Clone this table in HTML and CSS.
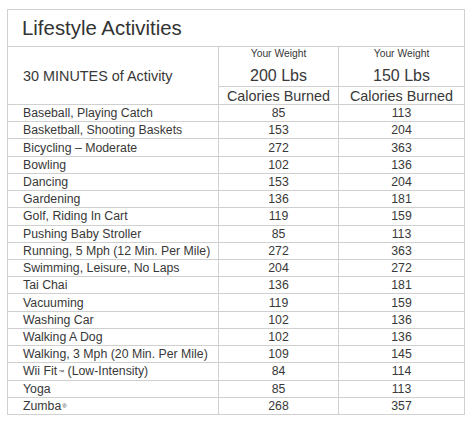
FILE: index.html
```html
<!DOCTYPE html>
<html>
<head>
<meta charset="utf-8">
<link rel="stylesheet" href="styles.css">
</head>
<body>
<div class="sheet">
  <div class="cell title">Lifestyle Activities</div>
  <div class="cell head-label">30 MINUTES of Activity</div>
  <div class="cell weight"><span class="yw">Your Weight</span><span class="lbs">200 Lbs</span></div>
  <div class="cell weight"><span class="yw">Your Weight</span><span class="lbs">150 Lbs</span></div>
  <div class="cell cal">Calories Burned</div>
  <div class="cell cal">Calories Burned</div>

  <div class="cell act">Baseball, Playing Catch</div><div class="cell num">85</div><div class="cell num">113</div>
  <div class="cell act">Basketball, Shooting Baskets</div><div class="cell num">153</div><div class="cell num">204</div>
  <div class="cell act">Bicycling – Moderate</div><div class="cell num">272</div><div class="cell num">363</div>
  <div class="cell act">Bowling</div><div class="cell num">102</div><div class="cell num">136</div>
  <div class="cell act">Dancing</div><div class="cell num">153</div><div class="cell num">204</div>
  <div class="cell act">Gardening</div><div class="cell num">136</div><div class="cell num">181</div>
  <div class="cell act">Golf, Riding In Cart</div><div class="cell num">119</div><div class="cell num">159</div>
  <div class="cell act">Pushing Baby Stroller</div><div class="cell num">85</div><div class="cell num">113</div>
  <div class="cell act">Running, 5 Mph (12 Min. Per Mile)</div><div class="cell num">272</div><div class="cell num">363</div>
  <div class="cell act">Swimming, Leisure, No Laps</div><div class="cell num">204</div><div class="cell num">272</div>
  <div class="cell act">Tai Chai</div><div class="cell num">136</div><div class="cell num">181</div>
  <div class="cell act">Vacuuming</div><div class="cell num">119</div><div class="cell num">159</div>
  <div class="cell act">Washing Car</div><div class="cell num">102</div><div class="cell num">136</div>
  <div class="cell act">Walking A Dog</div><div class="cell num">102</div><div class="cell num">136</div>
  <div class="cell act">Walking, 3 Mph (20 Min. Per Mile)</div><div class="cell num">109</div><div class="cell num">145</div>
  <div class="cell act"><span>Wii Fit<span class="mark">™</span> (Low-Intensity)</span></div><div class="cell num">84</div><div class="cell num">114</div>
  <div class="cell act">Yoga</div><div class="cell num">85</div><div class="cell num">113</div>
  <div class="cell act"><span>Zumba<span class="mark">®</span></span></div><div class="cell num">268</div><div class="cell num">357</div>
</div>
</body>
</html>
```
FILE: styles.css
```css
html, body {
  margin: 0;
  padding: 0;
  background: #ffffff;
}
body {
  padding: 9px 0 0 7px;
  font-family: "Liberation Sans", Arial, sans-serif;
  color: #383838;
}
.sheet {
  display: grid;
  grid-template-columns: 211px 120px 126px;
  grid-template-rows: 37px 40px 18px repeat(18, 17.22px);
  width: 458px;
  box-sizing: border-box;
  border-top: 1px solid #d0d0d0;
  border-left: 1px solid #d0d0d0;
}
.cell {
  box-sizing: border-box;
  border-right: 1px solid #d0d0d0;
  border-bottom: 1px solid #d0d0d0;
  display: flex;
  align-items: center;
  white-space: nowrap;
  overflow: hidden;
}
.title {
  grid-column: 1 / 4;
  font-size: 20.4px;
  padding-left: 14px;
  color: #333333;
}
.head-label {
  grid-column: 1;
  grid-row: 2 / 4;
  font-size: 14.4px;
  padding-left: 15px;
  padding-top: 1px;
}
.weight {
  flex-direction: column;
  align-items: center;
  justify-content: flex-start;
  padding-top: 1.4px;
  gap: 7.6px;
}
.yw {
  font-size: 10.3px;
  line-height: 11.5px;
}
.lbs {
  font-size: 16px;
  line-height: 17.9px;
}
.cal {
  justify-content: center;
  font-size: 14.4px;
}
.act {
  font-size: 12.3px;
  padding-left: 15px;
}
.num {
  justify-content: center;
  font-size: 12.3px;
}
.mark {
  font-size: 6px;
  position: relative;
  top: -1.5px;
  margin-left: 1px;
}
```
